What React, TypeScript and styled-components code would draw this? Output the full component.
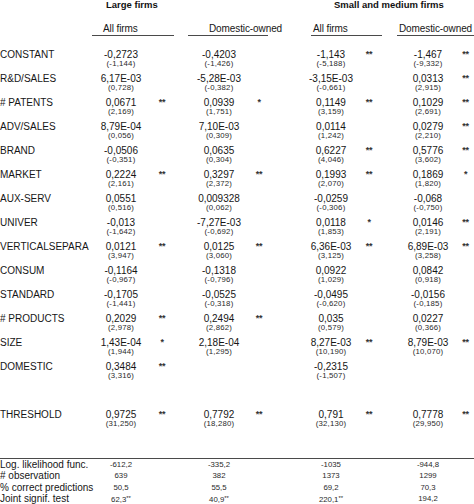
import React from "react";
import styled, { createGlobalStyle } from "styled-components";

const GlobalStyle = createGlobalStyle`
  html, body { margin: 0; padding: 0; background: #ffffff; }
  body { font-family: "Liberation Sans", Arial, sans-serif; color: #161616; }
`;

const COLS = "92px 58px 24px 14px 62px 18px 34px 58px 18px 21px 58px 17px";
const VALUE_COLS = [2, 5, 8, 11];
const STAR_COLS = [3, 6, 9, 12];

const Page = styled.div`
  width: 474px;
  height: 504px;
  overflow: hidden;
  background: #fff;
`;

const TitleRow = styled.div`
  display: grid;
  grid-template-columns: 106px 228px 1fr;
  height: 10px;
  font-size: 9.5px;
  line-height: 10px;
  font-weight: 700;
  color: #111;
`;

const Title = styled.div<{ $col: number }>`
  grid-column: ${(p) => p.$col};
  white-space: nowrap;
`;

const SubHeaderRow = styled.div`
  display: grid;
  grid-template-columns: 92px 82px 14px 80px 43px 71px 15px 77px;
  margin-top: 13px;
`;

const SubHeader = styled.div<{ $col: number; $pad: number }>`
  grid-column: ${(p) => p.$col};
  padding-left: ${(p) => p.$pad}px;
  font-size: 10px;
  line-height: 11px;
  padding-bottom: 1px;
  border-bottom: 1px solid #4a4a4a;
  white-space: nowrap;
  letter-spacing: -0.1px;
`;

const Body = styled.div`
  margin-top: 12.5px;
`;

const DataRow = styled.div`
  display: grid;
  grid-template-columns: ${COLS};
  height: 24.07px;
`;

const Label = styled.div`
  grid-column: 1;
  grid-row: 1;
  font-size: 10px;
  line-height: 11px;
  white-space: nowrap;
`;

const ValueCell = styled.div<{ $col: number }>`
  grid-column: ${(p) => p.$col};
  grid-row: 1;
  display: flex;
  flex-direction: column;
  align-items: center;
  white-space: nowrap;
`;

const MainValue = styled.span`
  font-size: 10px;
  line-height: 11px;
`;

const TStat = styled.span`
  font-size: 7.8px;
  line-height: 8px;
  color: #2a2a2a;
  letter-spacing: 0.2px;
`;

const Star = styled.div<{ $col: number }>`
  grid-column: ${(p) => p.$col};
  grid-row: 1;
  text-align: center;
  font-size: 9px;
  line-height: 11px;
  font-weight: 700;
  letter-spacing: -0.3px;
  color: #333;
`;

const Footer = styled.div`
  margin-top: 24px;
  border-top: 1px solid #4a4a4a;
`;

const FootRow = styled.div`
  display: grid;
  grid-template-columns: ${COLS};
  height: 11.67px;
`;

const FootLabel = styled.div`
  grid-column: 1;
  grid-row: 1;
  font-size: 10px;
  line-height: 11.67px;
  white-space: nowrap;
`;

const FootValue = styled.div<{ $col: number }>`
  grid-column: ${(p) => p.$col};
  grid-row: 1;
  text-align: center;
  font-size: 7.8px;
  line-height: 11.67px;
  white-space: nowrap;
  color: #2a2a2a;
`;

const Sup = styled.span`
  font-size: 6px;
  vertical-align: 2px;
`;

type Cell = [string, string, string] | null;
type Row = { label: string; cells: Cell[] } | null;

const rows: Row[] = [
  { label: "CONSTANT", cells: [["-0,2723", "(-1,144)", ""], ["-0,4203", "(-1,426)", ""], ["-1,143", "(-5,188)", "**"], ["-1,467", "(-9,332)", "**"]] },
  { label: "R&D/SALES", cells: [["6,17E-03", "(0,728)", ""], ["-5,28E-03", "(-0,382)", ""], ["-3,15E-03", "(-0,661)", ""], ["0,0313", "(2,915)", "**"]] },
  { label: "# PATENTS", cells: [["0,0671", "(2,169)", "**"], ["0,0939", "(1,751)", "*"], ["0,1149", "(3,159)", "**"], ["0,1029", "(2,691)", "**"]] },
  { label: "ADV/SALES", cells: [["8,79E-04", "(0,056)", ""], ["7,10E-03", "(0,309)", ""], ["0,0114", "(1,242)", ""], ["0,0279", "(2,210)", "**"]] },
  { label: "BRAND", cells: [["-0,0506", "(-0,351)", ""], ["0,0635", "(0,304)", ""], ["0,6227", "(4,046)", "**"], ["0,5776", "(3,602)", "**"]] },
  { label: "MARKET", cells: [["0,2224", "(2,161)", "**"], ["0,3297", "(2,372)", "**"], ["0,1993", "(2,070)", "**"], ["0,1869", "(1,820)", "*"]] },
  { label: "AUX-SERV", cells: [["0,0551", "(0,516)", ""], ["0,009328", "(0,062)", ""], ["-0,0259", "(-0,306)", ""], ["-0,068", "(-0,750)", ""]] },
  { label: "UNIVER", cells: [["-0,013", "(-1,642)", ""], ["-7,27E-03", "(-0,692)", ""], ["0,0118", "(1,853)", "*"], ["0,0146", "(2,191)", "**"]] },
  { label: "VERTICALSEPARA", cells: [["0,0121", "(3,947)", "**"], ["0,0125", "(3,060)", "**"], ["6,36E-03", "(3,125)", "**"], ["6,89E-03", "(3,258)", "**"]] },
  { label: "CONSUM", cells: [["-0,1164", "(-0,967)", ""], ["-0,1318", "(-0,796)", ""], ["0,0922", "(1,029)", ""], ["0,0842", "(0,918)", ""]] },
  { label: "STANDARD", cells: [["-0,1705", "(-1,441)", ""], ["-0,0525", "(-0,318)", ""], ["-0,0495", "(-0,620)", ""], ["-0,0156", "(-0,185)", ""]] },
  { label: "# PRODUCTS", cells: [["0,2029", "(2,978)", "**"], ["0,2494", "(2,862)", "**"], ["0,035", "(0,579)", ""], ["0,0227", "(0,366)", ""]] },
  { label: "SIZE", cells: [["1,43E-04", "(1,944)", "*"], ["2,18E-04", "(1,295)", ""], ["8,27E-03", "(10,190)", "**"], ["8,79E-03", "(10,070)", "**"]] },
  { label: "DOMESTIC", cells: [["0,3484", "(3,316)", "**"], null, ["-0,2315", "(-1,507)", ""], null] },
  null,
  { label: "THRESHOLD", cells: [["0,9725", "(31,250)", "**"], ["0,7792", "(18,280)", "**"], ["0,791", "(32,130)", "**"], ["0,7778", "(29,950)", "**"]] },
];

const footer: { label: string; values: [string, string][] }[] = [
  { label: "Log. likelihood func.", values: [["-612,2", ""], ["-335,2", ""], ["-1035", ""], ["-944,8", ""]] },
  { label: "# observation", values: [["639", ""], ["382", ""], ["1373", ""], ["1299", ""]] },
  { label: "% correct predictions", values: [["50,5", ""], ["55,5", ""], ["69,2", ""], ["70,3", ""]] },
  { label: "Joint signif. test", values: [["62,3", "**"], ["40,9", "**"], ["220,1", "**"], ["194,2", ""]] },
];

export default function App() {
  return (
    <Page>
      <GlobalStyle />
      <TitleRow>
        <Title $col={2}>Large firms</Title>
        <Title $col={3}>Small and medium firms</Title>
      </TitleRow>
      <SubHeaderRow>
        <SubHeader $col={2} $pad={11}>All firms</SubHeader>
        <SubHeader $col={4} $pad={21}>Domestic-owned</SubHeader>
        <SubHeader $col={6} $pad={2}>All firms</SubHeader>
        <SubHeader $col={8} $pad={2}>Domestic-owned</SubHeader>
      </SubHeaderRow>
      <Body>
        {rows.map((row, i) =>
          row ? (
            <DataRow key={i}>
              <Label>{row.label}</Label>
              {row.cells.map((c, j) =>
                c ? (
                  <React.Fragment key={j}>
                    <ValueCell $col={VALUE_COLS[j]}>
                      <MainValue>{c[0]}</MainValue>
                      <TStat>{c[1]}</TStat>
                    </ValueCell>
                    {c[2] && <Star $col={STAR_COLS[j]}>{c[2]}</Star>}
                  </React.Fragment>
                ) : null
              )}
            </DataRow>
          ) : (
            <DataRow key={i} />
          )
        )}
      </Body>
      <Footer>
        {footer.map((f, i) => (
          <FootRow key={i}>
            <FootLabel>{f.label}</FootLabel>
            {f.values.map((v, j) => (
              <FootValue key={j} $col={VALUE_COLS[j]}>
                {v[0]}
                {v[1] && <Sup>{v[1]}</Sup>}
              </FootValue>
            ))}
          </FootRow>
        ))}
      </Footer>
    </Page>
  );
}
